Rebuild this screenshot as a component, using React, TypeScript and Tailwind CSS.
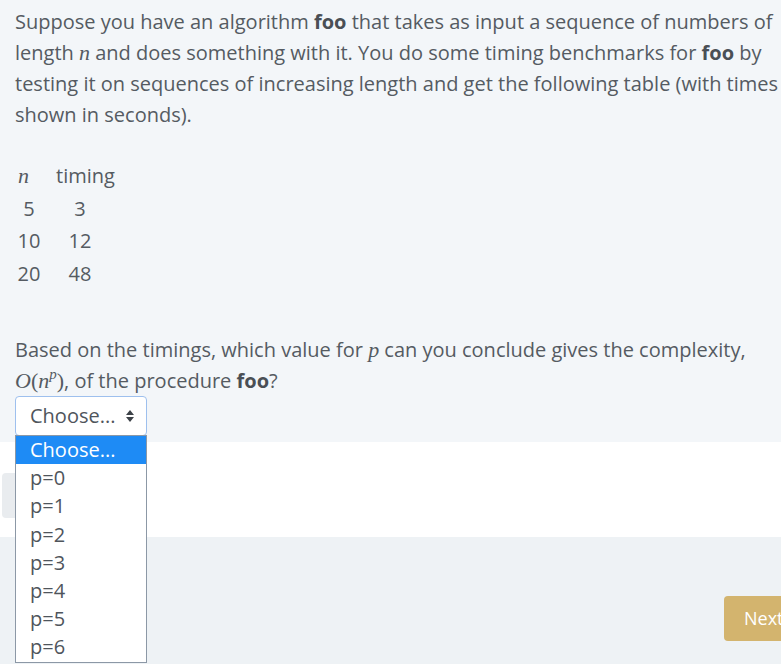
import React from "react";

const font = { fontFamily: '"Open Sans", "Noto Sans", sans-serif' };
const serif = { fontFamily: '"Liberation Serif", "DejaVu Serif", serif' };

function M({ children }: { children: React.ReactNode }) {
  return (
    <span className="italic text-[22px] leading-none" style={serif}>
      {children}
    </span>
  );
}

export default function App() {
  const options = ["p=0", "p=1", "p=2", "p=3", "p=4", "p=5", "p=6"];
  return (
    <div className="w-[781px] h-[664px] overflow-hidden bg-[#eef2f5] text-[#555b62]" style={font}>
      <div className="w-[800px]">
        <div className="bg-[#f3f6f9] pl-[15px] pt-[6px] pb-[6px]">
          <p className="w-[772px] text-[20px] leading-[31px]">
            Suppose you have an algorithm <b className="font-bold text-[#4a4f55]">foo</b> that takes as input a sequence of numbers of length <M>n</M> and does something with it. You do some timing benchmarks for <b className="font-bold text-[#4a4f55]">foo</b> by testing it on sequences of increasing length and get the following table (with times shown in seconds).
          </p>
          <table className="mt-[30px] text-[20px] leading-[32.5px]">
            <thead>
              <tr>
                <th className="w-[28px] pl-[3px] text-left font-normal"><M>n</M></th>
                <th className="w-[74px] pl-[13px] text-left font-normal">timing</th>
              </tr>
            </thead>
            <tbody>
              {[["5", "3"], ["10", "12"], ["20", "48"]].map(([a, b]) => (
                <tr key={a}>
                  <td className="text-center">{a}</td>
                  <td className="text-center">{b}</td>
                </tr>
              ))}
            </tbody>
          </table>
          <p className="mt-[44px] w-[772px] text-[20px] leading-[31px]">
            Based on the timings, which value for <M>p</M> can you conclude gives the complexity,{" "}
            <span style={serif} className="text-[22px] leading-none">
              <span className="italic">O</span>(<span className="italic">n</span>
              <span className="relative -top-[9px] italic text-[15px]">p</span>)
            </span>
            , of the procedure <b className="font-bold text-[#4a4f55]">foo</b>?
          </p>
          <div className="relative w-[132px]">
            <div className="flex h-[40px] items-center justify-between rounded-[4px] border border-[#9ec0ee] bg-white pl-[14px] pr-[11px] text-[20px] text-[#4f555c]">
              <span>Choose...</span>
              <svg width="10" height="14" viewBox="0 0 10 14">
                <path d="M5 1 L9 6 L1 6 Z M5 13 L9 8 L1 8 Z" fill="#3d4248" />
              </svg>
            </div>
            <div className="absolute left-0 top-[39px] z-10 w-[132px] border border-[#8c98a6] bg-white text-[20px] leading-[28.2px]">
              <div className="bg-[#1e8bf5] pl-[14px] text-white">Choose...</div>
              {options.map((o) => (
                <div key={o} className="pl-[14px] text-[#4f555c]">{o}</div>
              ))}
            </div>
          </div>
        </div>
        <div className="h-[95px] bg-white pt-[31px]">
          <div className="ml-[2px] h-[45px] w-[80px] rounded-[4px] bg-[#e9ecef]" />
        </div>
        <div className="flex justify-end pr-[2px] pt-[59px]">
          <button className="h-[45px] w-[74px] rounded-[4px] bg-[#d3b46e] pl-[20px] text-left text-[18px] text-white">Next</button>
        </div>
      </div>
    </div>
  );
}
